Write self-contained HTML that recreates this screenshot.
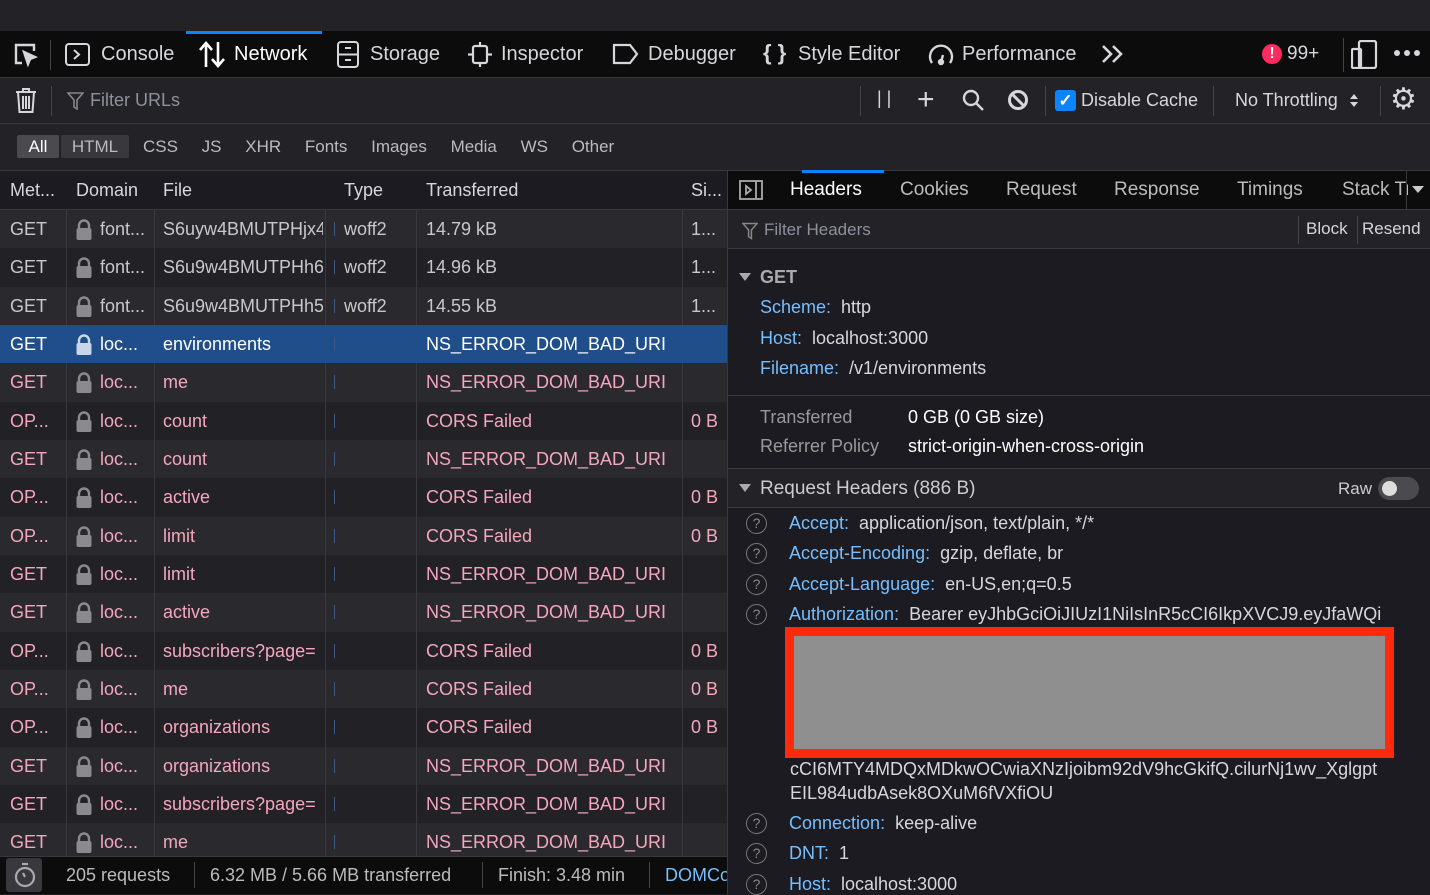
<!DOCTYPE html><html><head><style>
*{box-sizing:border-box;margin:0;padding:0}
body{width:1430px;height:894px;background:#1c1b22;font-family:"Liberation Sans",sans-serif;color:#d7d7db;position:relative;overflow:hidden;font-size:18px}
.a{position:absolute;white-space:nowrap}
.row{position:absolute;left:0;width:727px;height:38.33px}
.row span{position:absolute;top:9px;white-space:nowrap;overflow:hidden}
.lock{position:absolute;top:9px;left:75px;width:18px;height:21px}
.lbl{color:#75bfff}
.q{position:absolute;left:746px;width:21px;height:21px;border:1.5px solid #777;border-radius:50%;color:#888;font-size:14px;text-align:center;line-height:18px}
</style></head><body>
<div class="a" style="left:0;top:0;width:1430px;height:31px;background:#232327"></div>
<div class="a" style="left:0;top:31px;width:1430px;height:46px;background:#0c0c0d"></div>
<div class="a" style="left:186px;top:31px;width:136px;height:3px;background:#0a84ff"></div>
<svg class="a" style="left:12px;top:42px" width="28" height="26" viewBox="0 0 28 26" fill="none" stroke="#d7d7db" stroke-width="2.4"><path d="M10 21H4V3h18v6"/><path d="M12 10l4 12 2-5 5-2z" fill="#d7d7db"/></svg>
<div class="a" style="left:50px;top:40px;width:1px;height:30px;background:#444"></div>
<svg class="a" style="left:65px;top:43px" width="25" height="23" viewBox="0 0 25 23" fill="none" stroke="#d7d7db" stroke-width="2"><rect x="1" y="1" width="23" height="21" rx="3"/><path d="M9 7l5 4.5-5 4.5"/></svg>
<div class="a" style="left:101px;top:43px;font-size:20px">Console</div>
<svg class="a" style="left:199px;top:41px" width="26" height="27" viewBox="0 0 26 27" fill="none" stroke="#fff" stroke-width="2.6"><path d="M7 26V3M1 9l6-7 6 7M19 1v23M13 18l6 7 6-7"/></svg>
<div class="a" style="left:234px;top:43px;font-size:20px;color:#fff">Network</div>
<svg class="a" style="left:337px;top:41px" width="22" height="27" viewBox="0 0 22 27" fill="none" stroke="#d7d7db" stroke-width="2"><rect x="1" y="1" width="20" height="25" rx="3"/><path d="M1 13.5h20M8 7h6M8 19h6"/></svg>
<div class="a" style="left:370px;top:43px;font-size:20px">Storage</div>
<svg class="a" style="left:467px;top:41px" width="26" height="27" viewBox="0 0 26 27" fill="none" stroke="#d7d7db" stroke-width="2.2"><rect x="6" y="5" width="14" height="17" rx="2"/><path d="M13 1v4M13 22v4M1 13.5h5M20 13.5h5"/></svg>
<div class="a" style="left:501px;top:43px;font-size:20px">Inspector</div>
<svg class="a" style="left:612px;top:43px" width="27" height="22" viewBox="0 0 27 22" fill="none" stroke="#d7d7db" stroke-width="2.2"><path d="M2 2h16l7 9-7 9H2z"/></svg>
<div class="a" style="left:648px;top:43px;font-size:20px">Debugger</div>
<div class="a" style="left:763px;top:40px;font-size:22px;font-weight:bold">{ }</div>
<div class="a" style="left:798px;top:43px;font-size:20px">Style Editor</div>
<svg class="a" style="left:928px;top:41px" width="26" height="26" viewBox="0 0 26 26" fill="none" stroke="#d7d7db" stroke-width="2.4"><path d="M4 22A11 11 0 1 1 22 22"/><path d="M13 21l2-7"/><circle cx="13" cy="21" r="2" fill="#d7d7db"/></svg>
<div class="a" style="left:962px;top:43px;font-size:20px">Performance</div>
<svg class="a" style="left:1101px;top:44px" width="24" height="20" viewBox="0 0 24 20" fill="none" stroke="#d7d7db" stroke-width="2.6"><path d="M2 2l8 8-8 8M12 2l8 8-8 8"/></svg>
<div class="a" style="left:1262px;top:44px;width:20px;height:20px;border-radius:50%;background:#ff2a5f;color:#fff;font-weight:bold;text-align:center;line-height:20px;font-size:16px">!</div>
<div class="a" style="left:1287px;top:43px;font-size:19px">99+</div>
<div class="a" style="left:1343px;top:38px;width:1px;height:34px;background:#444"></div>
<svg class="a" style="left:1351px;top:40px" width="27" height="29" viewBox="0 0 27 29" fill="none" stroke="#d7d7db" stroke-width="2.2"><rect x="8" y="1" width="17" height="27" rx="2"/><rect x="1" y="9" width="9" height="19" rx="1"/></svg>
<svg class="a" style="left:1393px;top:49px" width="28" height="8" viewBox="0 0 28 8" fill="#d7d7db"><circle cx="4" cy="4" r="3"/><circle cx="14" cy="4" r="3"/><circle cx="24" cy="4" r="3"/></svg>

<div class="a" style="left:0;top:77px;width:1430px;height:93px;background:#232327;border-top:1px solid #38383d"></div>
<div class="a" style="left:0;top:123px;width:1430px;height:1px;background:#38383d"></div>
<svg class="a" style="left:15px;top:87px" width="22" height="27" viewBox="0 0 22 27" fill="none" stroke="#d7d7db" stroke-width="2"><path d="M1 5h20M8 5V2h6v3M3 5l1.5 20h13L19 5M8 9v13M11 9v13M14 9v13"/></svg>
<div class="a" style="left:51px;top:86px;width:1px;height:30px;background:#444"></div>
<svg class="a" style="left:67px;top:92px" width="17" height="18" viewBox="0 0 17 18" fill="none" stroke="#888" stroke-width="1.6"><path d="M1 1h15l-6 7v9l-3-2V8z"/></svg>
<div class="a" style="left:90px;top:90px;color:#8f8f9d;font-size:18px">Filter URLs</div>
<div class="a" style="left:860px;top:86px;width:1px;height:30px;background:#444"></div>
<div class="a" style="left:877px;top:88px;font-size:18px">| |</div>
<div class="a" style="left:917px;top:83px;font-size:30px">+</div>
<svg class="a" style="left:962px;top:89px" width="22" height="22" viewBox="0 0 22 22" fill="none" stroke="#d7d7db" stroke-width="2.4"><circle cx="9" cy="9" r="7"/><path d="M14 14l7 7"/></svg>
<svg class="a" style="left:1007px;top:89px" width="22" height="22" viewBox="0 0 22 22" fill="none" stroke="#d7d7db" stroke-width="3"><circle cx="11" cy="11" r="8.5"/><path d="M5 5l12 12"/></svg>
<div class="a" style="left:1045px;top:86px;width:1px;height:30px;background:#444"></div>
<div class="a" style="left:1055px;top:90px;width:21px;height:21px;border-radius:3px;background:#0a84ff;color:#fff;text-align:center;font-size:17px;line-height:21px;font-weight:bold">✓</div>
<div class="a" style="left:1081px;top:90px;font-size:18px">Disable Cache</div>
<div class="a" style="left:1213px;top:86px;width:1px;height:30px;background:#444"></div>
<div class="a" style="left:1235px;top:90px;font-size:18px">No Throttling</div>
<svg class="a" style="left:1349px;top:93px" width="10" height="15" viewBox="0 0 10 15" fill="#d7d7db"><path d="M1 6l4-5 4 5zM1 9l4 5 4-5z"/></svg>
<div class="a" style="left:1380px;top:86px;width:1px;height:30px;background:#444"></div>
<div class="a" style="left:1390px;top:82px;font-size:30px">⚙</div>

<div class="a" style="left:17px;top:135px;width:42px;height:23px;background:#4a4a4f;border-radius:2px;color:#fff;text-align:center;font-size:17px;line-height:23px">All</div>
<div class="a" style="left:61px;top:135px;width:68px;height:23px;background:#38383d;border-radius:2px;text-align:center;font-size:17px;line-height:23px;color:#bbb">HTML</div>
<div class="a" style="left:143px;top:137px;font-size:17px;color:#bbb;word-spacing:19px">CSS JS XHR Fonts Images Media WS Other</div>

<div class="a" style="left:0;top:170px;width:728px;height:40px;background:#1c1b22;border-top:1px solid #38383d;border-bottom:1px solid #38383d"></div>
<div class="a" style="left:10px;top:180px;font-size:18px">Met...</div>
<div class="a" style="left:76px;top:180px;font-size:18px">Domain</div>
<div class="a" style="left:163px;top:180px;font-size:18px">File</div>
<div class="a" style="left:344px;top:180px;font-size:18px">Type</div>
<div class="a" style="left:426px;top:180px;font-size:18px">Transferred</div>
<div class="a" style="left:691px;top:180px;font-size:18px">Si...</div>

<div id="rows"></div>
<script>
var d=[["GET","font...","S6uyw4BMUTPHjx4","woff2","14.79 kB","1..."],["GET","font...","S6u9w4BMUTPHh6","woff2","14.96 kB","1..."],["GET","font...","S6u9w4BMUTPHh5","woff2","14.55 kB","1..."],["GET","loc...","environments","","NS_ERROR_DOM_BAD_URI",""],["GET","loc...","me","","NS_ERROR_DOM_BAD_URI",""],["OP...","loc...","count","","CORS Failed","0 B"],["GET","loc...","count","","NS_ERROR_DOM_BAD_URI",""],["OP...","loc...","active","","CORS Failed","0 B"],["OP...","loc...","limit","","CORS Failed","0 B"],["GET","loc...","limit","","NS_ERROR_DOM_BAD_URI",""],["GET","loc...","active","","NS_ERROR_DOM_BAD_URI",""],["OP...","loc...","subscribers?page=","","CORS Failed","0 B"],["OP...","loc...","me","","CORS Failed","0 B"],["OP...","loc...","organizations","","CORS Failed","0 B"],["GET","loc...","organizations","","NS_ERROR_DOM_BAD_URI",""],["GET","loc...","subscribers?page=","","NS_ERROR_DOM_BAD_URI",""],["GET","loc...","me","","NS_ERROR_DOM_BAD_URI",""]];
var h="";
d.forEach(function(r,i){var sel=i==3,pk=i>3;var bg=sel?"#204e8a":(i%2==0?"#2a2a2e":"#222226");var c=sel?"#fff":(pk?"#f5a6bd":"#c8c8cc");var lc=sel?"#c9d6e8":"#8a8a8f";var lsel=sel?"transparent":"#38383d";
h+='<div class="row" style="top:'+(210+i*38.33)+'px;background:'+bg+';color:'+c+'">'+
'<div style="position:absolute;left:66px;top:0;width:1px;height:100%;background:'+lsel+'"></div><div style="position:absolute;left:154px;top:0;width:1px;height:100%;background:'+lsel+'"></div><div style="position:absolute;left:325px;top:0;width:1px;height:100%;background:'+lsel+'"></div><div style="position:absolute;left:334px;top:12px;width:1px;height:14px;background:#3a5a85"></div><div style="position:absolute;left:416px;top:0;width:1px;height:100%;background:'+lsel+'"></div><div style="position:absolute;left:682px;top:0;width:1px;height:100%;background:'+lsel+'"></div>'+
'<span style="left:10px">'+r[0]+'</span><svg class="lock" viewBox="0 0 18 21"><path d="M4 10V6.5a5 5 0 0 1 10 0V10" fill="none" stroke="'+lc+'" stroke-width="2.4"/><rect x="1.5" y="9" width="15" height="12" rx="2" fill="'+lc+'"/></svg><span style="left:100px">'+r[1]+'</span><span style="left:163px;width:160px">'+r[2]+'</span><span style="left:344px">'+r[3]+'</span><span style="left:426px">'+r[4]+'</span><span style="left:691px">'+r[5]+'</span></div>';});
document.getElementById("rows").innerHTML=h;
</script>

<div class="a" style="left:0;top:856px;width:728px;height:38px;background:#0c0c0d;border-top:1px solid #38383d"></div>
<div class="a" style="left:6px;top:858px;width:36px;height:34px;background:#38383d;border-radius:3px"></div>
<svg class="a" style="left:14px;top:861px" width="22" height="28" viewBox="0 0 22 28" fill="none" stroke="#aaa" stroke-width="2.2"><circle cx="11" cy="16" r="9"/><path d="M8 3h6M11 16l-2-4"/></svg>
<div class="a" style="left:66px;top:865px;font-size:18px;color:#bbb">205 requests</div>
<div class="a" style="left:194px;top:862px;width:1px;height:26px;background:#444"></div>
<div class="a" style="left:210px;top:865px;font-size:18px;color:#bbb">6.32 MB / 5.66 MB transferred</div>
<div class="a" style="left:482px;top:862px;width:1px;height:26px;background:#444"></div>
<div class="a" style="left:498px;top:865px;font-size:18px;color:#bbb">Finish: 3.48 min</div>
<div class="a" style="left:649px;top:862px;width:1px;height:26px;background:#444"></div>
<div class="a" style="left:665px;top:865px;font-size:18px;color:#75bfff;width:62px;overflow:hidden">DOMContentLoaded</div>

<div class="a" style="left:727px;top:170px;width:1px;height:724px;background:#38383d"></div>
<div class="a" style="left:728px;top:170px;width:702px;height:40px;background:#0c0c0d;border-top:1px solid #38383d;border-bottom:1px solid #38383d"></div>
<div class="a" style="left:802px;top:170px;width:82px;height:3px;background:#0a84ff"></div>
<svg class="a" style="left:739px;top:180px" width="24" height="20" viewBox="0 0 24 20" fill="none" stroke="#aaa" stroke-width="1.8"><rect x="1" y="1" width="22" height="18"/><path d="M17 1v18M7 6l5 4-5 4z"/></svg>
<div class="a" style="left:790px;top:179px;font-size:19px;color:#fff">Headers</div>
<div class="a" style="left:900px;top:179px;font-size:19px;color:#bbb">Cookies</div>
<div class="a" style="left:1006px;top:179px;font-size:19px;color:#bbb">Request</div>
<div class="a" style="left:1114px;top:179px;font-size:19px;color:#bbb">Response</div>
<div class="a" style="left:1237px;top:179px;font-size:19px;color:#bbb">Timings</div>
<div class="a" style="left:1342px;top:179px;font-size:19px;color:#bbb;width:66px;overflow:hidden">Stack Trace</div>
<div class="a" style="left:1406px;top:171px;width:1px;height:38px;background:#38383d"></div>
<svg class="a" style="left:1412px;top:186px" width="12" height="8" viewBox="0 0 12 8" fill="#ccc"><path d="M0 0h12L6 7z"/></svg>
<div class="a" style="left:728px;top:210px;width:702px;height:39px;background:#232327;border-bottom:1px solid #38383d"></div>
<svg class="a" style="left:742px;top:222px" width="16" height="18" viewBox="0 0 17 18" fill="none" stroke="#888" stroke-width="1.6"><path d="M1 1h15l-6 7v9l-3-2V8z"/></svg>
<div class="a" style="left:764px;top:220px;color:#8f8f9d;font-size:17px">Filter Headers</div>
<div class="a" style="left:1298px;top:216px;width:1px;height:28px;background:#444"></div>
<div class="a" style="left:1306px;top:219px;font-size:17px">Block</div>
<div class="a" style="left:1357px;top:216px;width:1px;height:28px;background:#444"></div>
<div class="a" style="left:1362px;top:219px;font-size:17px">Resend</div>

<svg class="a" style="left:739px;top:273px" width="12" height="9" viewBox="0 0 12 9" fill="#aaa"><path d="M0 0h12L6 8z"/></svg>
<div class="a" style="left:760px;top:267px;font-size:18px;font-weight:bold;color:#aaa">GET</div>
<div class="a" style="left:760px;top:297px;font-size:18px"><span class="lbl">Scheme:</span> &nbsp;http</div>
<div class="a" style="left:760px;top:328px;font-size:18px"><span class="lbl">Host:</span> &nbsp;localhost:3000</div>
<div class="a" style="left:760px;top:358px;font-size:18px"><span class="lbl">Filename:</span> &nbsp;/v1/environments</div>
<div class="a" style="left:728px;top:395px;width:702px;height:1px;background:#38383d"></div>
<div class="a" style="left:760px;top:407px;font-size:18px;color:#999">Transferred</div>
<div class="a" style="left:908px;top:407px;font-size:18px;color:#fff">0 GB (0 GB size)</div>
<div class="a" style="left:760px;top:436px;font-size:18px;color:#999">Referrer Policy</div>
<div class="a" style="left:908px;top:436px;font-size:18px;color:#fff">strict-origin-when-cross-origin</div>
<div class="a" style="left:728px;top:468px;width:702px;height:40px;background:#232327;border-top:1px solid #38383d;border-bottom:1px solid #38383d"></div>
<svg class="a" style="left:739px;top:484px" width="12" height="9" viewBox="0 0 12 9" fill="#aaa"><path d="M0 0h12L6 8z"/></svg>
<div class="a" style="left:760px;top:478px;font-size:19px;color:#ccc">Request Headers (886 B)</div>
<div class="a" style="left:1338px;top:479px;font-size:17px;color:#ccc">Raw</div>
<div class="a" style="left:1378px;top:477px;width:41px;height:23px;border-radius:12px;background:#4a4a4f"></div>
<div class="a" style="left:1382px;top:481px;width:15px;height:15px;border-radius:50%;background:#ddd"></div>

<div class="q" style="top:513px">?</div>
<div class="a" style="left:789px;top:513px;font-size:18px"><span class="lbl">Accept:</span> &nbsp;application/json, text/plain, */*</div>
<div class="q" style="top:543px">?</div>
<div class="a" style="left:789px;top:543px;font-size:18px"><span class="lbl">Accept-Encoding:</span> &nbsp;gzip, deflate, br</div>
<div class="q" style="top:574px">?</div>
<div class="a" style="left:789px;top:574px;font-size:18px"><span class="lbl">Accept-Language:</span> &nbsp;en-US,en;q=0.5</div>
<div class="q" style="top:604px">?</div>
<div class="a" style="left:789px;top:604px;font-size:18px"><span class="lbl">Authorization:</span> &nbsp;Bearer eyJhbGciOiJIUzI1NiIsInR5cCI6IkpXVCJ9.eyJfaWQi</div>
<div class="a" style="left:785px;top:627px;width:609px;height:131px;background:#ff2a0a"></div>
<div class="a" style="left:794px;top:636px;width:591px;height:113px;background:#8f8f8f"></div>
<div class="a" style="left:790px;top:759px;font-size:18px">cCI6MTY4MDQxMDkwOCwiaXNzIjoibm92dV9hcGkifQ.cilurNj1wv_Xglgpt</div>
<div class="a" style="left:790px;top:783px;font-size:18px">EIL984udbAsek8OXuM6fVXfiOU</div>
<div class="q" style="top:813px">?</div>
<div class="a" style="left:789px;top:813px;font-size:18px"><span class="lbl">Connection:</span> &nbsp;keep-alive</div>
<div class="q" style="top:843px">?</div>
<div class="a" style="left:789px;top:843px;font-size:18px"><span class="lbl">DNT:</span> &nbsp;1</div>
<div class="q" style="top:874px">?</div>
<div class="a" style="left:789px;top:874px;font-size:18px"><span class="lbl">Host:</span> &nbsp;localhost:3000</div>
</body></html>
